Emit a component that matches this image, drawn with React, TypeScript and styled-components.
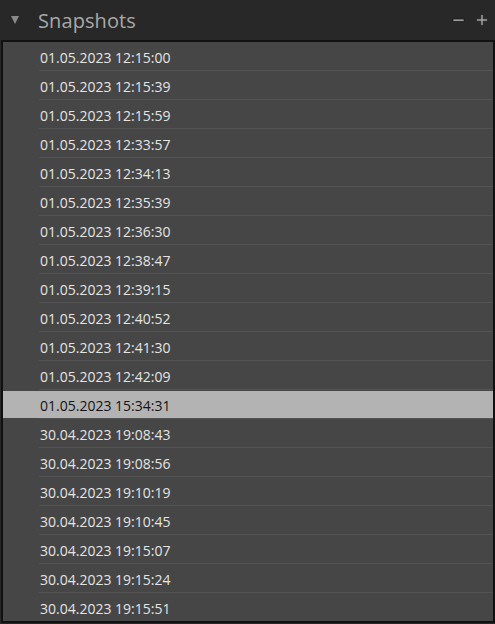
import styled, { createGlobalStyle } from "styled-components";

const GlobalStyle = createGlobalStyle`
  html, body {
    margin: 0;
    padding: 0;
    background: #282828;
  }
`;

const snapshots = [
  "01.05.2023 12:15:00",
  "01.05.2023 12:15:39",
  "01.05.2023 12:15:59",
  "01.05.2023 12:33:57",
  "01.05.2023 12:34:13",
  "01.05.2023 12:35:39",
  "01.05.2023 12:36:30",
  "01.05.2023 12:38:47",
  "01.05.2023 12:39:15",
  "01.05.2023 12:40:52",
  "01.05.2023 12:41:30",
  "01.05.2023 12:42:09",
  "01.05.2023 15:34:31",
  "30.04.2023 19:08:43",
  "30.04.2023 19:08:56",
  "30.04.2023 19:10:19",
  "30.04.2023 19:10:45",
  "30.04.2023 19:15:07",
  "30.04.2023 19:15:24",
  "30.04.2023 19:15:51",
];

const SELECTED = 12;

const Wrapper = styled.div`
  width: 495px;
  height: 624px;
  display: flex;
  flex-direction: column;
  background: #282828;
  font-family: "Open Sans", "Noto Sans", sans-serif;
  overflow: hidden;
`;

const Header = styled.div`
  height: 40px;
  display: flex;
  align-items: center;
  padding: 0 6px 0 11px;
  box-sizing: border-box;
`;

const Triangle = styled.span`
  width: 0;
  height: 0;
  border-left: 4px solid transparent;
  border-right: 4px solid transparent;
  border-top: 8px solid #8a8a8a;
  margin-right: 19px;
  margin-top: -1px;
`;

const Title = styled.h2`
  margin: 0;
  flex: 1;
  font-size: 20px;
  font-weight: 400;
  color: #a8a8a8;
  letter-spacing: 0.1px;
`;

const Controls = styled.div`
  display: flex;
  align-items: center;
  gap: 9px;
`;

const ControlIcon = styled.svg`
  width: 14px;
  height: 14px;
  display: block;
`;

const Panel = styled.ul`
  list-style: none;
  margin: 0 0 1px 1px;
  padding: 0;
  flex: 1;
  background: #464646;
  border: 2px solid #111111;
  overflow: hidden;
`;

const Row = styled.li<{ $selected?: boolean }>`
  height: 29px;
  box-sizing: border-box;
  position: relative;
  display: flex;
  align-items: center;
  padding: 2px 0 0 37px;
  font-size: 14px;
  color: ${(p) => (p.$selected ? "#141414" : "#e4e4e4")};
  background: ${(p) => (p.$selected ? "#b3b3b3" : "transparent")};
  border-top: 1px solid ${(p) => (p.$selected ? "#464646" : "transparent")};
  border-bottom: 1px solid ${(p) => (p.$selected ? "#464646" : "transparent")};

  &::after {
    content: "";
    position: absolute;
    left: 36px;
    right: 0;
    bottom: -1px;
    height: 1px;
    background: #545454;
  }
`;

function App() {
  return (
    <Wrapper>
      <GlobalStyle />
      <Header>
        <Triangle />
        <Title>Snapshots</Title>
        <Controls>
          <ControlIcon viewBox="0 0 14 14">
            <rect x="1" y="6" width="11" height="2.4" fill="#9a9a9a" stroke="#111" strokeWidth="0.6" />
          </ControlIcon>
          <ControlIcon viewBox="0 0 14 14">
            <path
              d="M5.8 1.5h2.4v4.3h4.3v2.4H8.2v4.3H5.8V8.2H1.5V5.8h4.3z"
              fill="#9a9a9a"
              stroke="#111"
              strokeWidth="0.6"
            />
          </ControlIcon>
        </Controls>
      </Header>
      <Panel>
        {snapshots.map((s, i) => (
          <Row key={s} $selected={i === SELECTED}>
            {s}
          </Row>
        ))}
      </Panel>
    </Wrapper>
  );
}

export default App;
